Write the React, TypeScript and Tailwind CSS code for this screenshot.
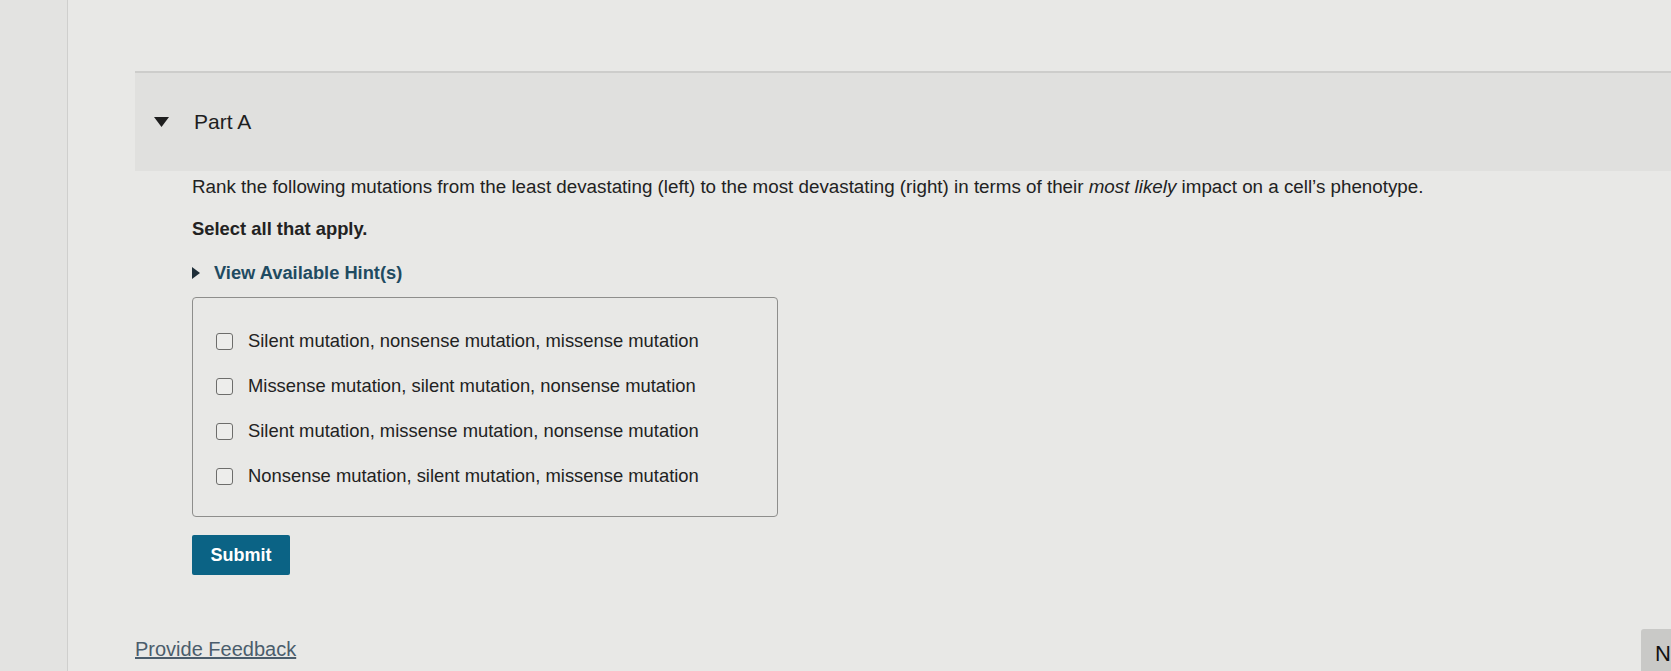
const options = [
  "Silent mutation, nonsense mutation, missense mutation",
  "Missense mutation, silent mutation, nonsense mutation",
  "Silent mutation, missense mutation, nonsense mutation",
  "Nonsense mutation, silent mutation, missense mutation",
];

const App = () => {
  return (
    <div
      className="flex h-[671px] w-full overflow-hidden bg-[#e8e8e6] text-[#222]"
      style={{ fontFamily: '"Liberation Sans", Arial, sans-serif' }}
    >
      {/* left gutter */}
      <div className="w-[68px] shrink-0 border-r border-[#cfcfcd] bg-[#e3e3e1]" />

      <div className="relative flex-1 pl-[67px] pt-[71px]">
        <div className="border-t-2 border-[#cdcdcb]">
          {/* part header */}
          <div className="flex h-[98px] items-center bg-[#e0e0de] pl-[19px]">
            <svg width="15" height="10" viewBox="0 0 15 10" className="mr-[25px]">
              <path d="M0 0 L15 0 L7.5 10 Z" fill="#1e1e1e" />
            </svg>
            <h2 className="text-[21px] font-medium text-[#1e1e1e]">Part A</h2>
          </div>

          <div className="pl-[57px]">
            <p className="mt-[4px] text-[18.8px] leading-6">
              Rank the following mutations from the least devastating (left) to the most
              devastating (right) in terms of their <em>most likely</em> impact on a
              cell’s phenotype.
            </p>
            <p className="mt-[18px] text-[18.4px] font-bold leading-6">Select all that apply.</p>

            <button className="mt-[20px] flex items-center gap-[14px] text-[18.3px] font-bold leading-6 text-[#1f4b61]">
              <svg width="8" height="12" viewBox="0 0 8 12">
                <path d="M0 0 L8 6 L0 12 Z" fill="#1e2e38" />
              </svg>
              View Available Hint(s)
            </button>

            <div className="mt-[12px] w-[586px] rounded-[4px] border border-[#8e8e8c] px-[23px] pt-[31px] pb-[28px]">
              <div className="flex flex-col gap-[21px]">
                {options.map((opt) => (
                  <label key={opt} className="flex items-center gap-[15px] text-[18.4px] leading-6">
                    <span className="h-[17px] w-[17px] rounded-[3px] border-[1.5px] border-[#6d6d6b] bg-[#ededeb]" />
                    {opt}
                  </label>
                ))}
              </div>
            </div>

            <button className="mt-[18px] h-[40px] w-[98px] rounded-[2px] bg-[#0b6385] text-[18px] font-bold text-white">
              Submit
            </button>
          </div>

          <a className="mt-[59px] block text-[20px] text-[#4b5d6c] underline">Provide Feedback</a>
        </div>

        {/* next button peeking at the corner */}
        <div className="absolute bottom-0 right-0 flex h-[42px] w-[30px] items-start justify-start rounded-tl-[3px] bg-[#c9c9c7] pl-[14px] pt-[8px] text-[22px] text-[#111]">
          N
        </div>
      </div>
    </div>
  );
};

export default App;
